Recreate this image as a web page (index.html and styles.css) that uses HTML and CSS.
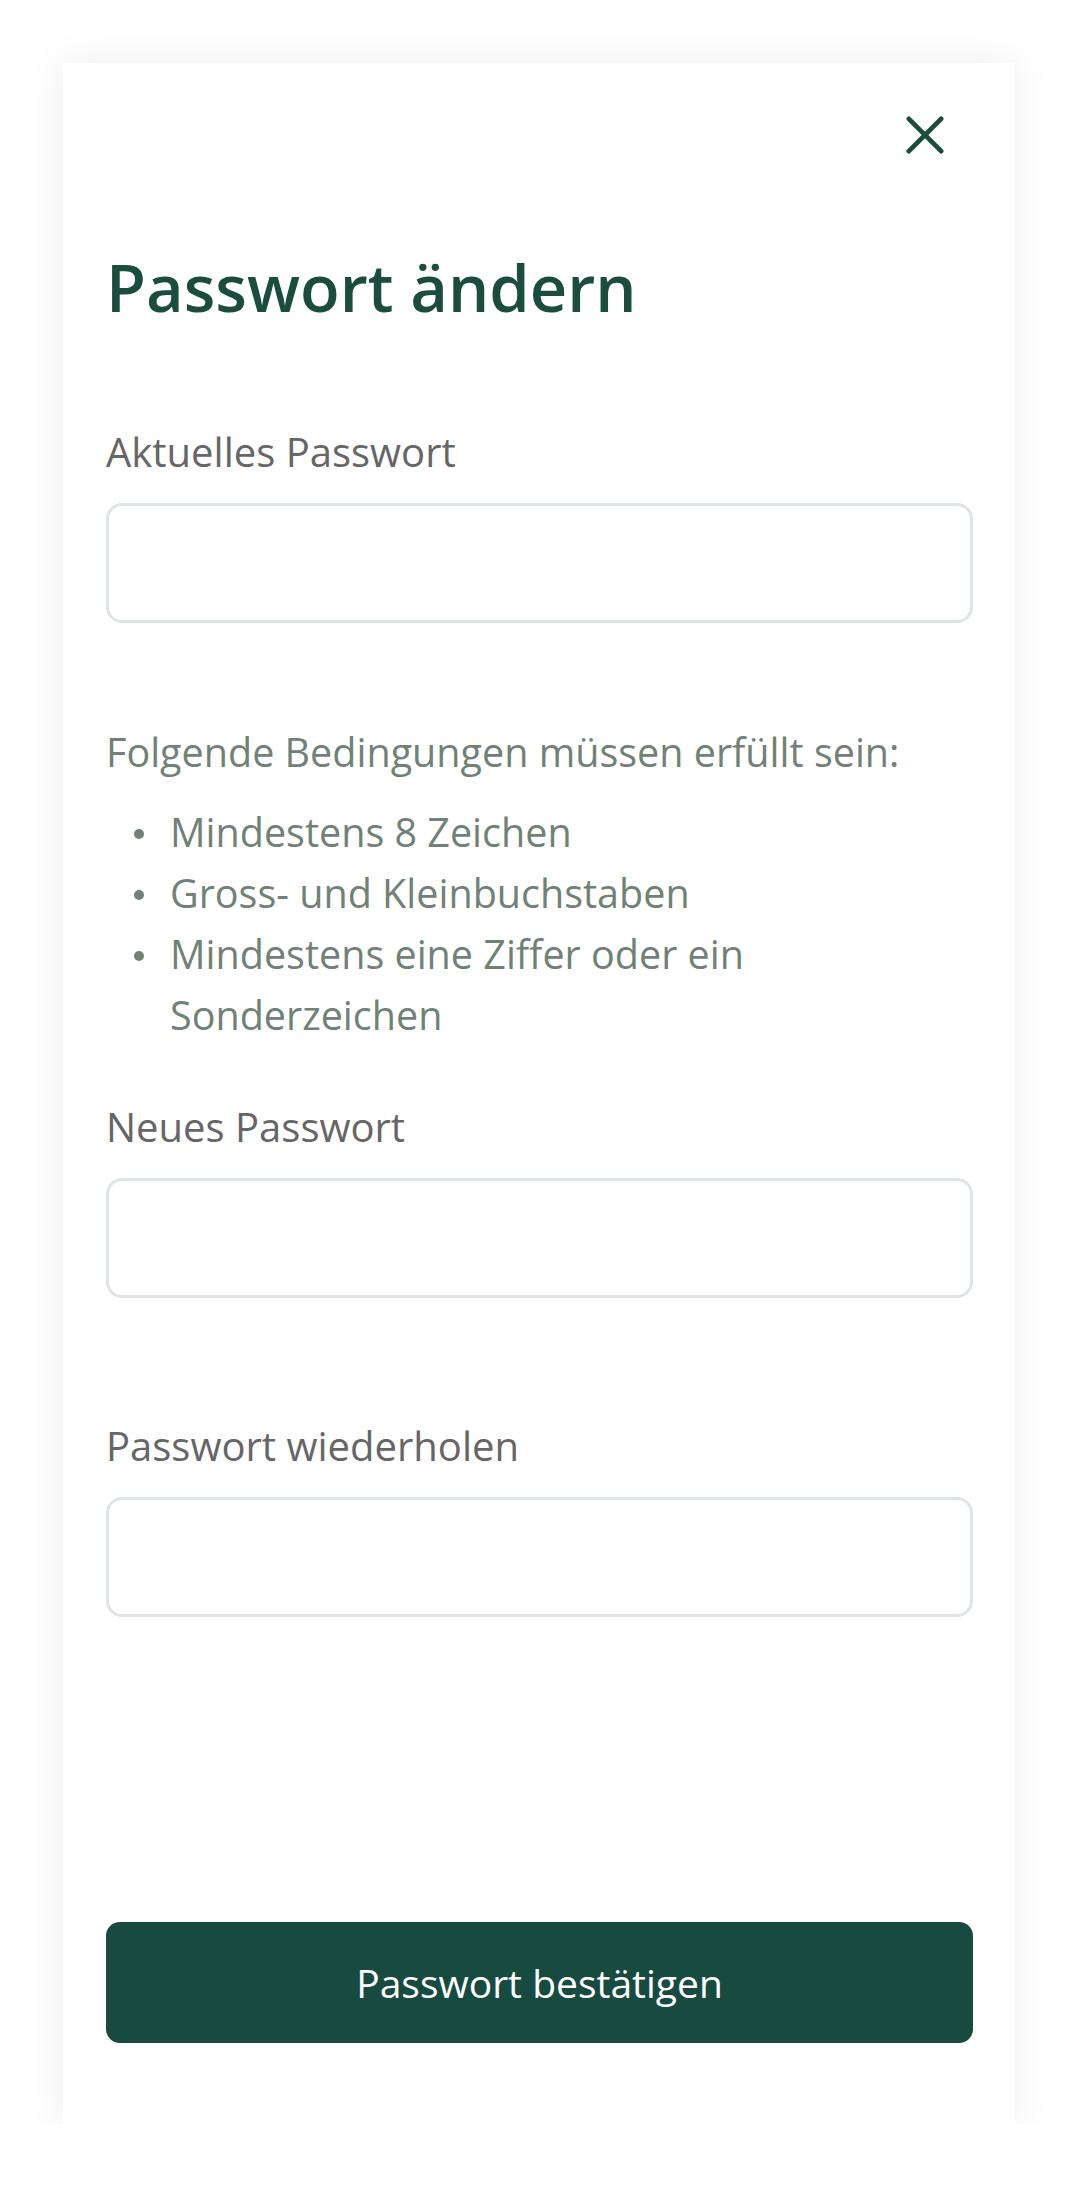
FILE: index.html
```html
<!DOCTYPE html>
<html>

<head>
  <meta charset="utf-8">
  <title>Passwort ändern</title>
  <link rel="stylesheet" href="styles.css">
</head>

<body>
  <div class="card">
    <div class="top">
      <button class="close" aria-label="Schliessen">
        <svg width="40" height="40" viewBox="0 0 40 40">
          <path d="M3 3 L37 37 M37 3 L3 37" stroke="#1b4d3f" stroke-width="5" stroke-linecap="round" fill="none"/>
        </svg>
      </button>
    </div>

    <h1 class="title">Passwort ändern</h1>

    <label class="lbl" for="current">Aktuelles Passwort</label>
    <input class="field" type="password" id="current">

    <p class="rules-head">Folgende Bedingungen müssen erfüllt sein:</p>
    <ul class="rules">
      <li>Mindestens 8 Zeichen</li>
      <li>Gross- und Kleinbuchstaben</li>
      <li>Mindestens eine Ziffer oder ein Sonderzeichen</li>
    </ul>

    <label class="lbl lbl-new" for="newpw">Neues Passwort</label>
    <input class="field" type="password" id="newpw">

    <label class="lbl lbl-repeat" for="repeat">Passwort wiederholen</label>
    <input class="field" type="password" id="repeat">

    <button class="submit">Passwort bestätigen</button>
  </div>
</body>

</html>
```

FILE: styles.css
```css
body {
  margin: 0;
  background: #ffffff;
  font-family: "Open Sans", Lato, sans-serif;
}

.card {
  box-sizing: border-box;
  width: 952px;
  height: 2061px;
  margin: 63px 0 0 63px;
  padding: 0 42px 81px 43px;
  background: #ffffff;
  box-shadow: 0 0 40px rgba(0, 0, 0, 0.07);
  display: flex;
  flex-direction: column;
}

.top {
  display: flex;
  justify-content: flex-end;
  padding-top: 42px;
}

.close {
  width: 60px;
  height: 60px;
  margin-right: 18px;
  padding: 0;
  border: none;
  background: transparent;
  display: flex;
  align-items: center;
  justify-content: center;
}

.close svg {
  width: 38px;
  height: 38px;
}

.title {
  margin: 82px 0 0 0;
  font-size: 65px;
  line-height: 80px;
  font-weight: 600;
  color: #1b4d3f;
}

.lbl {
  display: block;
  margin-top: 100px;
  font-size: 40px;
  line-height: 50px;
  color: #666666;
}

.lbl-new {
  margin-top: 56px;
}

.lbl-repeat {
  margin-top: 123px;
}

.field {
  box-sizing: border-box;
  display: block;
  width: 100%;
  height: 120px;
  margin-top: 26px;
  border: 3px solid #dfe6e2;
  border-radius: 16px;
  background: #ffffff;
  font-size: 36px;
  padding: 0 24px;
  outline: none;
}

.rules-head {
  margin: 104px 0 0 0;
  font-size: 39.5px;
  line-height: 50px;
  color: #6f8275;
}

.rules {
  list-style: none;
  margin: 25px 0 0 0;
  padding: 0 0 0 64px;
  max-width: 780px;
}

.rules li {
  position: relative;
  font-size: 39.5px;
  line-height: 61px;
  color: #6f8275;
}

.rules li::before {
  content: "";
  position: absolute;
  left: -36px;
  top: 27px;
  width: 10px;
  height: 10px;
  border-radius: 50%;
  background: #6f8275;
}

.submit {
  margin-top: auto;
  width: 100%;
  height: 121px;
  border: none;
  border-radius: 14px;
  background: #174b3f;
  color: #ffffff;
  font-family: "Open Sans", Lato, sans-serif;
  font-size: 39px;
}
```
